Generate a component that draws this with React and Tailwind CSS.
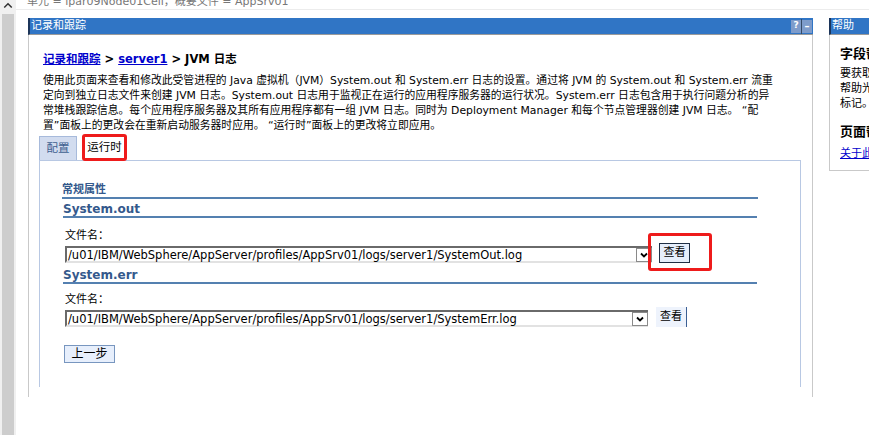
import { useState } from 'react'

const FONT = "font-['DejaVu_Sans','Noto_Sans_CJK_SC',sans-serif]"

const DESCRIPTION = [
  '使用此页面来查看和修改此受管进程的 Java 虚拟机（JVM）System.out 和 System.err 日志的设置。通过将 JVM 的 System.out 和 System.err 流重',
  '定向到独立日志文件来创建 JVM 日志。System.out 日志用于监视正在运行的应用程序服务器的运行状况。System.err 日志包含用于执行问题分析的异',
  '常堆栈跟踪信息。每个应用程序服务器及其所有应用程序都有一组 JVM 日志。同时为 Deployment Manager 和每个节点管理器创建 JVM 日志。 “配',
  '置”面板上的更改会在重新启动服务器时应用。 “运行时”面板上的更改将立即应用。',
]

const LOG_DIR = '/u01/IBM/WebSphere/AppServer/profiles/AppSrv01/logs/server1/'

function Chevron({ className }) {
  return (
    <svg viewBox="0 0 10 10" className={className} fill="none" stroke="currentColor" strokeWidth="1.8">
      <path d="M2 3.5 L5 6.5 L8 3.5" />
    </svg>
  )
}

function SectionHeading({ children, className = '' }) {
  return (
    <div className={`text-[11px] font-bold text-[#34598c] border-b-2 border-[#5480b0] ${className}`}>
      {children}
    </div>
  )
}

function FileField({ file, selectWidth, highlighted, mt }) {
  return (
    <>
      <div className={`${mt} ml-[3px] text-[11px] leading-[14px] text-black`}>文件名：</div>
      <div className="flex items-end ml-[3px]">
        <div
          className="flex items-center h-[17px] border-t-2 border-l-2 border-b-2 border-t-[#6a6a6a] border-l-[#6a6a6a] border-b-[#e2e2e2] bg-white"
          style={{ width: selectWidth }}
        >
          <span className="flex-1 pl-[1px] text-[11.5px] leading-[14px] text-black whitespace-nowrap overflow-hidden">
            {LOG_DIR}{file}
          </span>
          <span className="flex items-center justify-center w-[16px] h-[14px] border border-[#8a8a8a] bg-white text-black">
            <Chevron className="w-[10px] h-[10px]" />
          </span>
        </div>
        {highlighted ? (
          <span className="relative ml-[7px]">
            <button className="flex items-center justify-center w-[31px] h-[20px] bg-[#e6eefb] border border-[#1f2f45] text-[11px] text-black">
              查看
            </button>
            <span className="absolute left-[-11px] top-[-10px] w-[64px] h-[38px] border-[3px] border-[#ee1b1b] rounded-[3px] pointer-events-none" />
          </span>
        ) : (
          <button className="ml-[8px] flex items-center justify-center w-[31px] h-[20px] bg-[#eef3fc] border-r border-[#3b5f94] text-[11px] text-black">
            查看
          </button>
        )}
      </div>
    </>
  )
}

export default function App() {
  const [tab, setTab] = useState('runtime')

  return (
    <div className={`${FONT} flex w-[869px] h-[435px] overflow-hidden bg-white`}>
      {/* left scrollbar */}
      <div className="flex flex-col w-[16px] shrink-0 bg-[#f0f0f0]">
        <div className="flex items-start justify-center h-[14px] text-[#333]">
          <svg viewBox="0 0 12 8" className="w-[10px] h-[7px] mt-[2px]" fill="none" stroke="currentColor" strokeWidth="1.8">
            <path d="M1.5 6.5 L6 2 L10.5 6.5" />
          </svg>
        </div>
        <div className="flex-1 ml-[2px] w-[12px] bg-[#cdcdcd]" />
      </div>

      <div className="flex-1 min-w-0">
        {/* context line, cut off at top */}
        <div className="h-[9px] overflow-hidden border-b border-[#ececec] box-content">
          <div className="pl-[11px] -mt-[5px] text-[11px] leading-[13px] text-[#777] whitespace-nowrap">
            单元 = lpar09Node01Cell，概要文件 = AppSrv01
          </div>
        </div>

        <div className="flex items-start mt-[8px]">
          {/* main panel */}
          <div className="ml-[12px] w-[785px] shrink-0">
            <div className="flex items-center h-[16px] bg-[#3075c5] border-l-2 border-[#1c355a] border-b border-b-[#9a9a9a] box-content">
              <span className="flex-1 pl-[1px] text-[11px] leading-[14px] text-white">记录和跟踪</span>
              <span className="flex items-center justify-center w-[10px] h-[13px] bg-[#7e9ccb] text-[9px] font-bold text-white">?</span>
              <span className="w-[1px] h-[15px] bg-[#354a66]" />
              <span className="flex items-center justify-center w-[10px] h-[13px] mr-[1px] bg-[#7e9ccb] text-[10px] font-bold text-white">–</span>
            </div>

            <div className="border-l border-r border-[#c9c9c9] pl-[10px] pr-[11px] pb-[10px]">
              <div className="pt-[17px] pl-[4px] text-[11.5px] leading-[15px] font-bold text-black whitespace-nowrap">
                <a className="text-[#0000cc] underline">记录和跟踪</a>
                {' > '}
                <a className="text-[#0000cc] underline">server1</a>
                {' > JVM 日志'}
              </div>

              <div className="mt-[6px] pl-[4px] text-[10.8px] leading-[15px] text-black">
                {DESCRIPTION.map(line => (
                  <div key={line} className="whitespace-nowrap">{line}</div>
                ))}
              </div>

              {/* tabs */}
              <div className="flex items-start h-[26px] mt-[1px]">
                <button
                  onClick={() => setTab('config')}
                  className="mt-[2px] h-[24px] w-[38px] flex items-center justify-center bg-[#d2dcef] border border-b-0 border-[#a7badb] text-[11.5px] text-[#3f6090]"
                >
                  配置
                </button>
                <button
                  onClick={() => setTab('runtime')}
                  className="relative z-10 ml-[5px] h-[27px] w-[45px] flex items-center justify-center bg-white border-[3px] border-[#ee1b1b] rounded-[3px] text-[11.5px] text-black"
                >
                  运行时
                </button>
              </div>

              <div className="border-t border-l border-r border-[#b8c8e3] pl-[22px] pr-[42px] pt-[22px] pb-[24px]">
                <SectionHeading className="leading-[14px]">常规属性</SectionHeading>
                <SectionHeading className="mt-[4px] ml-[1px] mr-[1px] leading-[13px] text-[12px]">System.out</SectionHeading>
                <FileField file="SystemOut.log" selectWidth={587} highlighted mt="mt-[11px]" />
                <SectionHeading className="mt-[6px] ml-[1px] mr-[1px] leading-[13px] text-[12px]">System.err</SectionHeading>
                <FileField file="SystemErr.log" selectWidth={583} mt="mt-[9px]" />
                <button className="mt-[18px] ml-[2px] w-[51px] h-[18px] flex items-center justify-center bg-[#e7effc] border border-[#7896bf] text-[12px] text-black">
                  上一步
                </button>
              </div>
            </div>
          </div>

          {/* help panel */}
          <div className="ml-[16px] w-[200px] shrink-0">
            <div className="flex items-center h-[16px] bg-[#3075c5] border-l-2 border-[#1c355a] border-b border-b-[#9a9a9a] box-content">
              <span className="pl-[1px] text-[11px] leading-[14px] text-white">帮助</span>
            </div>
            <div className="border-l border-b border-[#c9c9c9] pl-[10px] pt-[11px] pb-[9px] whitespace-nowrap">
              <div className="text-[13px] leading-[16px] font-bold text-black">字段帮助</div>
              <div className="mt-[4px] text-[11px] leading-[15px] text-black">
                <div>要获取字段帮助信息，请在</div>
                <div>帮助光标出现时选择字段标签或列表</div>
                <div>标记。</div>
              </div>
              <div className="mt-[13px] text-[13px] leading-[16px] font-bold text-black">页面帮助</div>
              <a className="block mt-[6px] text-[11px] leading-[15px] text-[#0000cc] underline">关于此页面的更多信息</a>
            </div>
          </div>
        </div>
      </div>
    </div>
  )
}
